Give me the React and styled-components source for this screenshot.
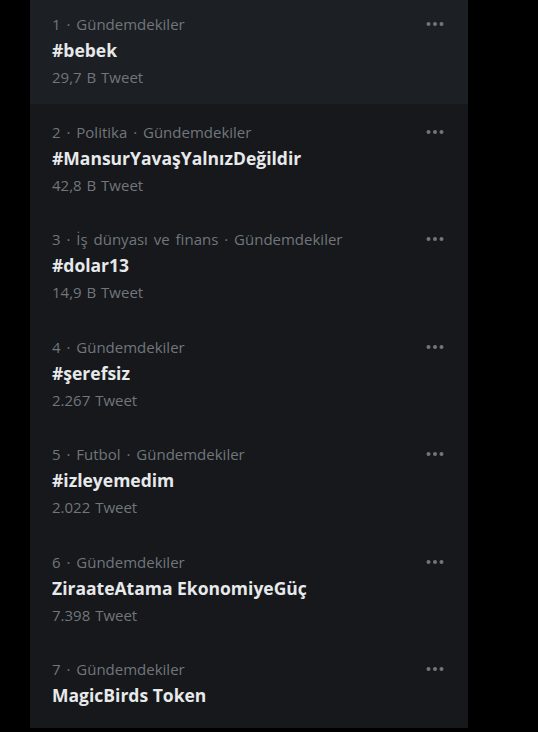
import React from 'react';
import styled, { createGlobalStyle } from 'styled-components';

const GlobalStyle = createGlobalStyle`
  html, body {
    margin: 0;
    padding: 0;
    background: #000;
  }
  body {
    font-family: "Open Sans", "Noto Sans", "Liberation Sans", sans-serif;
    -webkit-font-smoothing: antialiased;
  }
`;

const trends = [
  { rank: 1, category: null, name: '#bebek', count: '29,7 B Tweet' },
  { rank: 2, category: 'Politika', name: '#MansurYavaşYalnızDeğildir', count: '42,8 B Tweet' },
  { rank: 3, category: 'İş dünyası ve finans', name: '#dolar13', count: '14,9 B Tweet' },
  { rank: 4, category: null, name: '#şerefsiz', count: '2.267 Tweet' },
  { rank: 5, category: 'Futbol', name: '#izleyemedim', count: '2.022 Tweet' },
  { rank: 6, category: null, name: 'ZiraateAtama EkonomiyeGüç', count: '7.398 Tweet' },
  { rank: 7, category: null, name: 'MagicBirds Token', count: null },
];

const MoreIcon = () => (
  <svg width="22" height="22" viewBox="0 0 22 22" fill="#71767b">
    <circle cx="4.5" cy="11" r="2" />
    <circle cx="11" cy="11" r="2" />
    <circle cx="17.5" cy="11" r="2" />
  </svg>
);

const App = () => {
  return (
    <>
      <GlobalStyle />
      <Page>
        <Panel>
          {trends.map((t, i) => (
            <Trend key={t.rank} $active={i === 0}>
              <MetaRow>
                <Meta>
                  {t.rank} · {t.category ? `${t.category} · ` : ''}Gündemdekiler
                </Meta>
                <MoreButton aria-label="Diğer">
                  <MoreIcon />
                </MoreButton>
              </MetaRow>
              <Title>{t.name}</Title>
              {t.count && <Count>{t.count}</Count>}
            </Trend>
          ))}
        </Panel>
      </Page>
    </>
  );
};

const Page = styled.div`
  height: 732px;
  overflow: hidden;
  padding-left: 30px;
`;

const Panel = styled.section`
  width: 438px;
  min-height: 100%;
  background: #16181c;
  margin-top: -4px;
`;

const Trend = styled.article`
  padding: 18px 22px 16.5px;
  background: ${p => (p.$active ? '#1c1f23' : 'transparent')};
`;

const MetaRow = styled.div`
  display: flex;
  align-items: center;
  justify-content: space-between;
  height: 20px;
`;

const Meta = styled.span`
  font-size: 15px;
  line-height: 20px;
  word-spacing: 2px;
  color: #71767b;
`;

const MoreButton = styled.div`
  display: flex;
  margin-right: 0.5px;
`;

const Title = styled.div`
  margin-top: 4px;
  font-size: 17.5px;
  line-height: 24px;
  font-weight: 700;
  color: #e7e9ea;
`;

const Count = styled.div`
  margin-top: 5px;
  font-size: 15px;
  line-height: 20px;
  word-spacing: 1px;
  color: #71767b;
`;

export default App;
